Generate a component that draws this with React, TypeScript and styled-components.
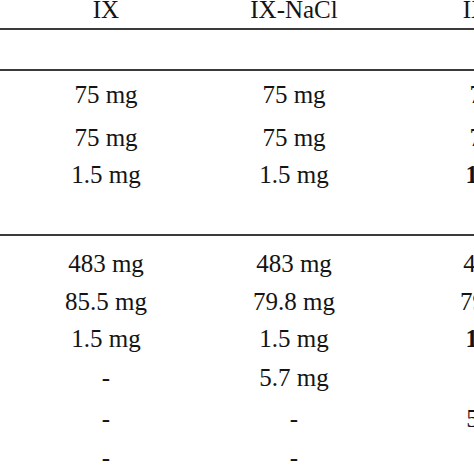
import React from "react";
import styled, { createGlobalStyle } from "styled-components";

const Global = createGlobalStyle`
  html, body { margin: 0; padding: 0; background: #ffffff; }
  body { overflow: hidden; width: 474px; height: 474px; }
`;

const Page = styled.div`
  width: 474px;
  height: 474px;
  overflow: hidden;
  background: #ffffff;
`;

const Table = styled.div`
  width: 626px;
  display: flex;
  flex-direction: column;
  font-family: "Liberation Serif", "Times New Roman", serif;
  font-size: 25px;
  color: #141414;
`;

const Row = styled.div<{ $h: number }>`
  display: grid;
  grid-template-columns: 212px 164px 250px;
  height: ${(p) => p.$h}px;
  line-height: ${(p) => p.$h}px;
`;

const Cell = styled.div<{ $bold?: boolean }>`
  text-align: center;
  white-space: nowrap;
  font-weight: ${(p) => (p.$bold ? 700 : 400)};
`;

const Rule = styled.div`
  height: 2px;
  background: #3a3a3a;
`;

const Spacer = styled.div<{ $h: number }>`
  height: ${(p) => p.$h}px;
`;

type R = { h: number; cells: [string, string, string]; bold3?: boolean };

const section1: R[] = [
  { h: 47, cells: ["75 mg", "75 mg", "75 mg"] },
  { h: 39, cells: ["75 mg", "75 mg", "75 mg"] },
  { h: 35, cells: ["1.5 mg", "1.5 mg", "1.5 mg"], bold3: true },
];

const section2: R[] = [
  { h: 39, cells: ["483 mg", "483 mg", "483 mg"] },
  { h: 37, cells: ["85.5 mg", "79.8 mg", "79.8 mg"] },
  { h: 37, cells: ["1.5 mg", "1.5 mg", "1.5 mg"], bold3: true },
  { h: 42, cells: ["-", "5.7 mg", "-"] },
  { h: 39, cells: ["-", "-", "5.7 mg"] },
  { h: 40, cells: ["-", "-", "-"] },
];

const Rows: React.FC<{ rows: R[] }> = ({ rows }) => (
  <>
    {rows.map((r, i) => (
      <Row key={i} $h={r.h}>
        <Cell>{r.cells[0]}</Cell>
        <Cell>{r.cells[1]}</Cell>
        <Cell $bold={r.bold3}>{r.cells[2]}</Cell>
      </Row>
    ))}
  </>
);

export default function App() {
  return (
    <Page>
      <Global />
      <Table>
        <Row $h={19}>
          <Cell>IX</Cell>
          <Cell>IX-NaCl</Cell>
          <Cell>IX-KCl</Cell>
        </Row>
        <Spacer $h={9} />
        <Rule />
        <Spacer $h={39} />
        <Rule />
        <Rows rows={section1} />
        <Spacer $h={42} />
        <Rule />
        <Spacer $h={8} />
        <Rows rows={section2} />
      </Table>
    </Page>
  );
}
